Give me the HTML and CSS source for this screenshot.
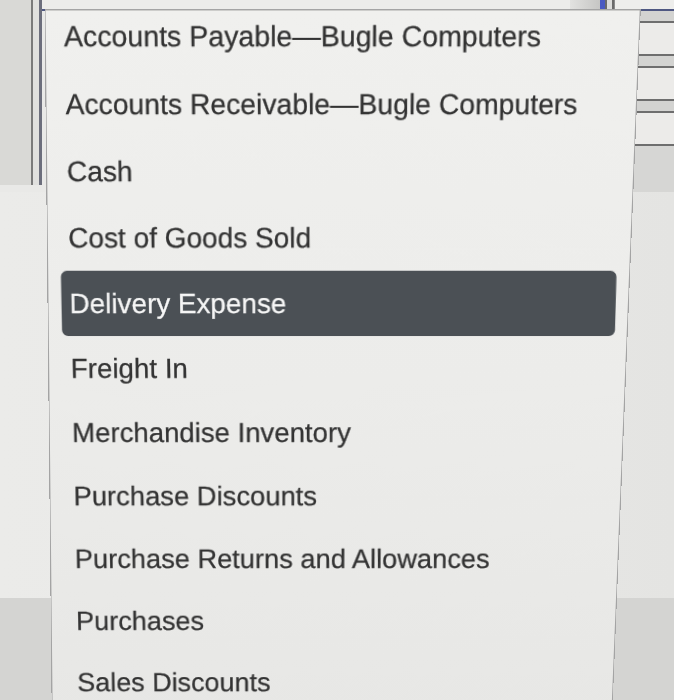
FILE: index.html
```html
<!DOCTYPE html>
<html lang="en">
<head>
<meta charset="utf-8">
<title>Account select</title>
<link rel="stylesheet" href="styles.css">
</head>
<body>
<div class="scene">
  <div class="backdrop">
    <div class="top">
      <div class="edge"></div>
      <div class="rails"></div>
      <div class="main">
        <div class="field">
          <div class="field-input"></div>
          <div class="field-btn"></div>
          <div class="field-focus"></div>
          <div class="field-rails"></div>
          <div class="field-cell"></div>
        </div>
        <div class="grid">
          <div class="grid-gray"></div>
          <div class="grid-light"></div>
          <div class="grid-gray"></div>
          <div class="grid-light"></div>
          <div class="grid-gray"></div>
          <div class="grid-light"></div>
          <div class="grid-tail"></div>
        </div>
      </div>
    </div>
    <div class="middle"></div>
    <div class="bottom"></div>
  </div>

  <div class="menu">
    <ul class="options">
      <li class="option">Accounts Payable—Bugle Computers</li>
      <li class="option">Accounts Receivable—Bugle Computers</li>
      <li class="option">Cash</li>
      <li class="option">Cost of Goods Sold</li>
      <li class="option active">Delivery Expense</li>
      <li class="option">Freight In</li>
      <li class="option">Merchandise Inventory</li>
      <li class="option">Purchase Discounts</li>
      <li class="option">Purchase Returns and Allowances</li>
      <li class="option">Purchases</li>
      <li class="option">Sales Discounts</li>
    </ul>
  </div>
</div>
</body>
</html>
```

FILE: styles.css
```css
html, body {
  margin: 0;
  padding: 0;
}

body {
  width: 674px;
  height: 700px;
  overflow: hidden;
  background: #e7e7e5;
  font-family: "Liberation Sans", Arial, sans-serif;
}

.scene {
  position: relative;
  width: 674px;
  height: 700px;
  overflow: hidden;
}

.backdrop {
  display: flex;
  flex-direction: column;
  height: 700px;
}

.top {
  display: flex;
  align-items: flex-start;
  height: 192px;
  background: #e9e9e7;
}

.edge {
  width: 31px;
  height: 185px;
  background: #d9d9d6;
}

.rails {
  box-sizing: border-box;
  width: 11px;
  height: 185px;
  border-left: 2px solid #7a7a7a;
  border-right: 3px solid #6c6e7c;
  background: #e0e0de;
}

.main {
  flex: 1;
  display: flex;
  flex-direction: column;
}

.field {
  display: flex;
  height: 9px;
  border-bottom: 2px solid #4f5882;
}

.field-input {
  flex: 1;
  background: #ececea;
}

.field-btn {
  width: 30px;
  background: linear-gradient(90deg, #e2e2e0, #c6c6c4);
}

.field-focus {
  width: 5px;
  background: #4a5ac2;
}

.field-rails {
  box-sizing: border-box;
  width: 9px;
  border-left: 2px solid #6a6a6a;
  border-right: 2px solid #6a6a6a;
  background: #dcdcda;
}

.field-cell {
  width: 60px;
  box-sizing: border-box;
  border-left: 1px solid #8a8a8a;
  background: #eeeeec;
}

.grid {
  margin-left: auto;
  width: 74px;
  display: flex;
  flex-direction: column;
}

.grid-gray {
  height: 10px;
  background: #d3d3d1;
  border-bottom: 2px solid #6e6e6e;
}

.grid-light {
  height: 31px;
  background: #ecebe9;
  border-bottom: 2px solid #6e6e6e;
}

.grid-tail {
  height: 48px;
  background: #d6d6d4;
}

.middle {
  height: 406px;
  background: linear-gradient(90deg, #ebebe9 0%, #e8e8e6 60%, #e4e4e2 100%);
}

.bottom {
  flex: 1;
  background: #d4d4d2;
}

.menu {
  position: absolute;
  left: 48px;
  top: 18px;
  width: 579px;
  height: 720px;
  box-sizing: border-box;
  border: 1px solid #a4a4a4;
  background: linear-gradient(180deg, #f0f0ee 0%, #ececea 50%, #e7e7e5 100%);
  overflow: hidden;
  transform-origin: 117px 332px;
  transform: perspective(1000px) rotateX(-5deg);
}

.options {
  list-style: none;
  margin: -8px 0 0 0;
  padding: 0;
  transform-origin: 0 300px;
  transform: skewX(0.7deg);
}

.option {
  display: flex;
  align-items: center;
  height: 65px;
  margin: 0 12px 0 13px;
  padding: 0 8px;
  border-radius: 6px;
  font-size: 27.75px;
  color: #333333;
  -webkit-text-stroke: 0.25px #333333;
  white-space: nowrap;
}

.option.active {
  background: #4b5055;
  color: #f6f6f6;
  -webkit-text-stroke: 0.25px #f6f6f6;
}
```
